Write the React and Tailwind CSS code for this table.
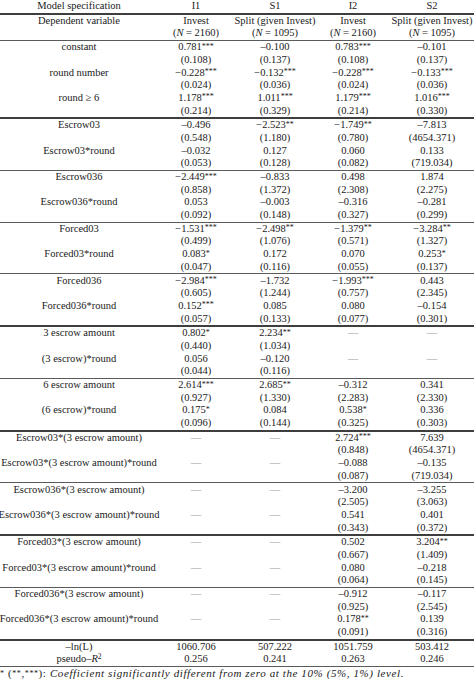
import React from 'react';

const widths = ['w-[158px]', 'w-[76px]', 'w-[82px]', 'w-[74px]', 'w-[84px]'];

const blocks = [
  {
    after: 'double',
    rows: [
      ['constant', '0.781***', '–0.100', '0.783***', '–0.101'],
      ['', '(0.108)', '(0.137)', '(0.108)', '(0.137)'],
      ['round number', '−0.228***', '−0.132***', '−0.228***', '−0.133***'],
      ['', '(0.024)', '(0.036)', '(0.024)', '(0.036)'],
      ['round ≥ 6', '1.178***', '1.011***', '1.179***', '1.016***'],
      ['', '(0.214)', '(0.329)', '(0.214)', '(0.330)'],
    ],
  },
  {
    after: 'single',
    rows: [
      ['Escrow03', '–0.496', '−2.523**', '−1.749**', '–7.813'],
      ['', '(0.548)', '(1.180)', '(0.780)', '(4654.371)'],
      ['Escrow03*round', '–0.032', '0.127', '0.060', '0.133'],
      ['', '(0.053)', '(0.128)', '(0.082)', '(719.034)'],
    ],
  },
  {
    after: 'single',
    rows: [
      ['Escrow036', '−2.449***', '–0.833', '0.498', '1.874'],
      ['', '(0.858)', '(1.372)', '(2.308)', '(2.275)'],
      ['Escrow036*round', '0.053', '–0.003', '–0.316', '–0.281'],
      ['', '(0.092)', '(0.148)', '(0.327)', '(0.299)'],
    ],
  },
  {
    after: 'single',
    rows: [
      ['Forced03', '−1.531***', '−2.498**', '−1.379**', '−3.284**'],
      ['', '(0.499)', '(1.076)', '(0.571)', '(1.327)'],
      ['Forced03*round', '0.083*', '0.172', '0.070', '0.253*'],
      ['', '(0.047)', '(0.116)', '(0.055)', '(0.137)'],
    ],
  },
  {
    after: 'double',
    rows: [
      ['Forced036', '−2.984***', '–1.732', '−1.993***', '0.443'],
      ['', '(0.605)', '(1.244)', '(0.757)', '(2.345)'],
      ['Forced036*round', '0.152***', '0.085', '0.080', '–0.154'],
      ['', '(0.057)', '(0.133)', '(0.077)', '(0.301)'],
    ],
  },
  {
    after: 'single',
    rows: [
      ['3 escrow amount', '0.802*', '2.234**', '—', '—'],
      ['', '(0.440)', '(1.034)', '', ''],
      ['(3 escrow)*round', '0.056', '–0.120', '—', '—'],
      ['', '(0.044)', '(0.116)', '', ''],
    ],
  },
  {
    after: 'double',
    rows: [
      ['6 escrow amount', '2.614***', '2.685**', '–0.312', '0.341'],
      ['', '(0.927)', '(1.330)', '(2.283)', '(2.330)'],
      ['(6 escrow)*round', '0.175*', '0.084', '0.538*', '0.336'],
      ['', '(0.096)', '(0.144)', '(0.325)', '(0.303)'],
    ],
  },
  {
    after: 'single',
    rows: [
      ['Escrow03*(3 escrow amount)', '—', '—', '2.724***', '7.639'],
      ['', '', '', '(0.848)', '(4654.371)'],
      ['Escrow03*(3 escrow amount)*round', '—', '—', '–0.088', '–0.135'],
      ['', '', '', '(0.087)', '(719.034)'],
    ],
  },
  {
    after: 'double',
    rows: [
      ['Escrow036*(3 escrow amount)', '—', '—', '–3.200', '–3.255'],
      ['', '', '', '(2.505)', '(3.063)'],
      ['Escrow036*(3 escrow amount)*round', '—', '—', '0.541', '0.401'],
      ['', '', '', '(0.343)', '(0.372)'],
    ],
  },
  {
    after: 'single',
    rows: [
      ['Forced03*(3 escrow amount)', '—', '—', '0.502', '3.204**'],
      ['', '', '', '(0.667)', '(1.409)'],
      ['Forced03*(3 escrow amount)*round', '—', '—', '0.080', '–0.218'],
      ['', '', '', '(0.064)', '(0.145)'],
    ],
  },
  {
    after: 'double',
    rows: [
      ['Forced036*(3 escrow amount)', '—', '—', '–0.912', '–0.117'],
      ['', '', '', '(0.925)', '(2.545)'],
      ['Forced036*(3 escrow amount)*round', '—', '—', '0.178**', '0.139'],
      ['', '', '', '(0.091)', '(0.316)'],
    ],
  },
];

// small raised stars, kept inside the row box
const Stars = ({ s }) => <span className="relative -top-[1.5px] text-[8px]">{s}</span>;

const Value = ({ text }) => {
  if (text === '—') return <span className="text-[#a0a0a0]">—</span>;
  const m = text.match(/^(.*?)(\*+)$/);
  if (!m) return <span>{text}</span>;
  return (
    <span>
      {m[1]}
      <Stars s={m[2]} />
    </span>
  );
};

const Row = ({ cells }) => (
  <div className="flex h-[12.7px] items-center">
    {cells.map((c, i) => (
      <div key={i} className={`${widths[i]} flex shrink-0 justify-center whitespace-nowrap`}>
        {typeof c === 'string' ? <Value text={c} /> : c}
      </div>
    ))}
  </div>
);

const Single = () => <div className="h-px bg-[#5a5a5a]" />;
const Double = () => <div className="h-[2px] bg-[#3e3e3e]" />;

const N = ({ n }) => (
  <span>
    (<i>N</i> = {n})
  </span>
);

export default function App() {
  return (
    <div
      className="w-[474px] h-[679px] overflow-hidden bg-white text-[#1a1a1a] text-[10.5px] leading-none"
      style={{ fontFamily: '"Liberation Serif", "DejaVu Serif", serif' }}
    >
      <Row cells={['Model specification', 'I1', 'S1', 'I2', 'S2']} />
      <Double />
      <Row cells={['Dependent variable', 'Invest', 'Split (given Invest)', 'Invest', 'Split (given Invest)']} />
      <Row cells={['', <N n="2160" />, <N n="1095" />, <N n="2160" />, <N n="1095" />]} />
      <Single />

      {blocks.map((b, bi) => (
        <div key={bi}>
          {b.rows.map((r, ri) => (
            <Row key={ri} cells={r} />
          ))}
          {b.after === 'double' ? <Double /> : <Single />}
        </div>
      ))}

      <Row cells={['–ln(L)', '1060.706', '507.222', '1051.759', '503.412']} />
      <Row
        cells={[
          <span>
            pseudo–<i>R</i>
            <span className="relative -top-[3px] text-[7.5px]">2</span>
          </span>,
          '0.256',
          '0.241',
          '0.263',
          '0.246',
        ]}
      />
      <Single />

      <div className="h-[13px] flex items-center whitespace-nowrap text-[11px] tracking-[0.6px]">
        <span>
          <Stars s="*" /> (<Stars s="**" />,<Stars s="***" />):{' '}
          <i>Coefficient significantly different from zero at the 10% (5%, 1%) level.</i>
        </span>
      </div>
    </div>
  );
}
